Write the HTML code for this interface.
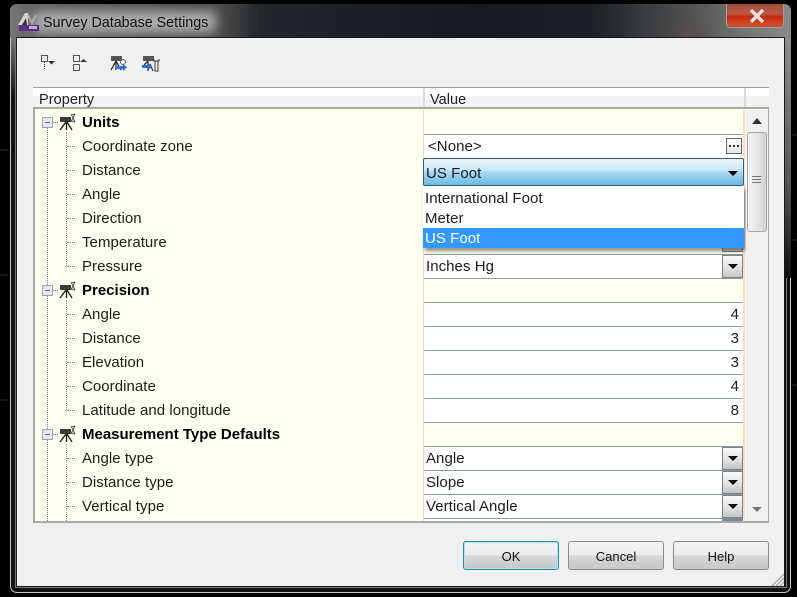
<!DOCTYPE html>
<html><head><meta charset="utf-8"><title>Survey Database Settings</title>
<style>
html,body{margin:0;padding:0;background:#000}
body{width:797px;height:597px;position:relative;overflow:hidden;font-family:"Liberation Sans",sans-serif;font-size:15px;letter-spacing:.05px;color:#1c1c1c}
.a{position:absolute}
.t{position:absolute;white-space:nowrap;line-height:18px;height:18px;margin-top:1px}
.l{left:82px}
.b{font-weight:bold;color:#000;left:82px;letter-spacing:0}
.v{left:426px}
.n{right:58px}
.y{position:absolute;left:423px;width:320px;height:24px;background:#fffff0}
.w{position:absolute;left:423px;width:320px;height:25px;box-sizing:border-box;background:#fff;border-top:1px solid #8b9aa6;border-bottom:1px solid #8b9aa6}
.c{position:absolute;left:722px;width:19px;height:21px;border:1px solid #808080;background:linear-gradient(#fafafa,#e8e8e8 45%,#c6c6c6)}
.c:after{content:"";position:absolute;left:5px;top:8px;border:5px solid transparent;border-top:5px solid #000;border-bottom:0}
.h{position:absolute;left:67px;width:8px;height:0;border-top:1px dotted #777}
.btn{position:absolute;top:541px;width:94px;height:27px;border:1px solid #8a8a8a;border-radius:3px;background:linear-gradient(#f4f4f4,#ececec 48%,#d6d6d6 52%,#c8c8c8);text-align:center;line-height:29px;font-size:13px;letter-spacing:0;color:#111}
</style></head><body>

<svg class="a" style="left:0;top:0" width="797" height="597">
<path d="M0 150H9M0 275H8M0 400H8M792 135H797M792 240H797M792 385H797" stroke="#2a2a2a"/>
</svg>

<!-- window frame -->
<div class="a" style="left:10px;top:4px;width:781px;height:589px;border-radius:7px;box-sizing:border-box;border:1px solid #c8c8c8;border-top:0;background:#111"></div>
<div class="a" style="left:15px;top:36px;width:772px;height:552px;box-sizing:border-box;border:1px solid #777"></div>
<div class="a" style="left:10px;top:4px;width:781px;height:34px;border-radius:7px 7px 0 0;overflow:hidden;background:linear-gradient(90deg,#777 0,#5a5a5a 4%,#444 28%,#23272b 32%,#161a1e 60%,#1e2226 75%,#555 88%,#6e7070 93%,#8a8a8a 100%)">
  <div class="a" style="left:24px;top:7px;width:182px;height:22px;background:#b0b0b0;filter:blur(6px)"></div>
  <div class="a" style="left:670px;top:22px;width:22px;height:14px;background:#5f4d4d;filter:blur(6px)"></div>
</div>
<div class="a" style="left:785px;top:38px;width:6px;height:240px;background:linear-gradient(#8f8f8f,#555 60%,#111)"></div>
<div class="a" style="left:11px;top:38px;width:4px;height:60px;background:linear-gradient(#777,#111)"></div>

<!-- app icon -->
<svg class="a" style="left:18px;top:11px" width="22" height="20" viewBox="0 0 22 20">
<path d="M0 14L7 2L10 2L10 14Z" fill="#d8d4d8"/><path d="M4 14L8 7L9 14Z" fill="#333"/>
<path d="M10 4L14 12L18 4" fill="none" stroke="#aaa" stroke-width="2"/>
<rect x="1" y="14" width="20" height="6" fill="#5d2f80"/><rect x="11" y="15" width="8" height="3" fill="#c9a5e0"/>
</svg>
<div class="t" style="left:43px;top:13px;font-size:14.300px;letter-spacing:0;color:#101010">Survey Database Settings</div>

<!-- close -->
<div class="a" style="left:726px;top:4px;width:58px;height:24px;box-sizing:border-box;border:1px solid #b89a90;border-top:0;border-radius:0 0 4px 4px;background:linear-gradient(#9a4a3a,#bd5a45 40%,#c42a10 55%,#d04a28 85%,#b8503a)"></div>
<svg class="a" style="left:749px;top:9px" width="16" height="14" viewBox="0 0 16 14"><path d="M2 1L14 13M14 1L2 13" stroke="#e8e4e0" stroke-width="3.400"/></svg>

<!-- client -->
<div class="a" style="left:16px;top:37px;width:769px;height:550px;box-sizing:border-box;border:1px solid #14181c;background:#f0f0f0"></div>
<div class="a" style="left:17px;top:38px;width:1px;height:548px;background:#fff"></div>

<!-- toolbar -->
<svg class="a" style="left:38px;top:52px" width="130" height="22" viewBox="0 0 130 22" fill="none">
<rect x="3.500" y="3.500" width="6" height="6" stroke="#555"/><path d="M6.500 10V18" stroke="#444" stroke-dasharray="1 1"/><path d="M10 9H17L13.500 12.500Z" fill="#333"/>
<rect x="35.500" y="3.500" width="6" height="6" stroke="#555"/><rect x="35.500" y="12.500" width="6" height="6" stroke="#555"/><path d="M42 10H49L45.500 7Z" fill="#333"/>
<g><rect x="73" y="4" width="11" height="5" fill="#555"/><path d="M78 9L73 18M78 9V18M78 9L83 18" stroke="#333" stroke-width="1.300"/><circle cx="85" cy="10" r="2.500" stroke="#666"/>
<path d="M79 14H85V11.500L89 15.500L85 19V17H79Z" fill="#2e74c8"/></g>
<g><rect x="105" y="4" width="11" height="5" fill="#555"/><path d="M110 9L106 13M110 9V19M112 12L115 19" stroke="#333" stroke-width="1.300"/>
<path d="M104 13H110V10.500L114 14.500L110 18.500V16H104Z" fill="#2e74c8"/><path d="M117 9V19H120V9M116 7V9H121V7" stroke="#555" stroke-width="1.200"/></g>
</svg>

<!-- table frame -->
<div class="a" style="left:33px;top:87px;width:736px;height:21px;background:linear-gradient(#fff 0,#fff 38%,#f3f3f4 40%,#f1f1f2);border-top:1px solid #a0a0a0;box-sizing:border-box"></div>
<div class="a" style="left:33px;top:107px;width:736px;height:416px;box-sizing:border-box;border:2px solid #a8a8a8;border-width:2px 1px 2px 2px;background:#fffff0"></div>
<div class="a" style="left:423px;top:88px;width:2px;height:19px;background:#dcdcdc"></div>
<div class="a" style="left:744px;top:88px;width:2px;height:19px;background:#dcdcdc"></div>
<div class="t" style="left:39px;top:90px;font-size:14.500px;color:#222">Property</div>
<div class="t" style="left:430px;top:90px;font-size:14.500px;color:#222">Value</div>

<!-- value rows -->
<div class="y" style="top:110px"></div>
<div class="w" style="top:134px"></div>
<div class="w" style="top:254px"></div>
<div class="w" style="top:302px"></div>
<div class="w" style="top:326px"></div>
<div class="w" style="top:350px"></div>
<div class="w" style="top:374px"></div>
<div class="w" style="top:398px"></div>
<div class="w" style="top:446px"></div>
<div class="w" style="top:470px"></div>
<div class="w" style="top:494px"></div>
<div class="a" style="left:423px;top:519px;width:320px;height:2px;background:#fff"></div>
<div class="a" style="left:423px;top:110px;width:1px;height:411px;background:#f2d6cc"></div>
<div class="a" style="left:743px;top:110px;width:2px;height:411px;background:#f6dccf"></div>

<!-- tree lines -->
<div class="a" style="left:47px;top:128px;height:393px;border-left:1px dotted #888"></div>
<div class="a" style="left:66px;top:132px;height:134px;border-left:1px dotted #888"></div>
<div class="a" style="left:66px;top:300px;height:110px;border-left:1px dotted #888"></div>
<div class="a" style="left:66px;top:444px;height:77px;border-left:1px dotted #888"></div>
<div class="h" style="top:146px"></div><div class="h" style="top:170px"></div><div class="h" style="top:194px"></div><div class="h" style="top:218px"></div><div class="h" style="top:242px"></div><div class="h" style="top:266px"></div>
<div class="h" style="top:314px"></div><div class="h" style="top:338px"></div><div class="h" style="top:362px"></div><div class="h" style="top:386px"></div><div class="h" style="top:410px"></div>
<div class="h" style="top:458px"></div><div class="h" style="top:482px"></div><div class="h" style="top:506px"></div>

<!-- group icons -->
<svg class="a" style="left:42px;top:112px" width="36" height="20" viewBox="0 0 36 20" fill="none">
<rect x=".500" y="5.500" width="10" height="10" fill="#e4e8ec" stroke="#9aa6b2"/><path d="M3 10.500H8" stroke="#667"/><path d="M11 10.500H16" stroke="#888" stroke-dasharray="1 1"/>
<rect x="18" y="5" width="11" height="5" fill="#3a3a3a"/><path d="M29 3L33 2M29 9L33 10M33 2L29 10M29 2L33 10" stroke="#555"/><path d="M24 10L18 18M24.500 10V18M25 10L30 18" stroke="#222" stroke-width="1.400"/>
</svg>
<svg class="a" style="left:42px;top:280px" width="36" height="20" viewBox="0 0 36 20" fill="none">
<rect x=".500" y="5.500" width="10" height="10" fill="#e4e8ec" stroke="#9aa6b2"/><path d="M3 10.500H8" stroke="#667"/><path d="M11 10.500H16" stroke="#888" stroke-dasharray="1 1"/>
<rect x="18" y="5" width="11" height="5" fill="#3a3a3a"/><path d="M29 3L33 2M29 9L33 10M33 2L29 10M29 2L33 10" stroke="#555"/><path d="M24 10L18 18M24.500 10V18M25 10L30 18" stroke="#222" stroke-width="1.400"/>
</svg>
<svg class="a" style="left:42px;top:424px" width="36" height="20" viewBox="0 0 36 20" fill="none">
<rect x=".500" y="5.500" width="10" height="10" fill="#e4e8ec" stroke="#9aa6b2"/><path d="M3 10.500H8" stroke="#667"/><path d="M11 10.500H16" stroke="#888" stroke-dasharray="1 1"/>
<rect x="18" y="5" width="11" height="5" fill="#3a3a3a"/><path d="M29 3L33 2M29 9L33 10M33 2L29 10M29 2L33 10" stroke="#555"/><path d="M24 10L18 18M24.500 10V18M25 10L30 18" stroke="#222" stroke-width="1.400"/>
</svg>

<!-- labels -->
<div class="t b" style="top:113px">Units</div>
<div class="t l" style="top:137px">Coordinate zone</div>
<div class="t l" style="top:161px">Distance</div>
<div class="t l" style="top:185px">Angle</div>
<div class="t l" style="top:209px">Direction</div>
<div class="t l" style="top:233px">Temperature</div>
<div class="t l" style="top:257px">Pressure</div>
<div class="t b" style="top:281px">Precision</div>
<div class="t l" style="top:305px">Angle</div>
<div class="t l" style="top:329px">Distance</div>
<div class="t l" style="top:353px">Elevation</div>
<div class="t l" style="top:377px">Coordinate</div>
<div class="t l" style="top:401px">Latitude and longitude</div>
<div class="t b" style="top:425px">Measurement Type Defaults</div>
<div class="t l" style="top:449px">Angle type</div>
<div class="t l" style="top:473px">Distance type</div>
<div class="t l" style="top:497px">Vertical type</div>

<!-- values -->
<div class="t" style="left:428px;top:137px">&lt;None&gt;</div>
<div class="t v" style="top:257px">Inches Hg</div>
<div class="t n" style="top:305px">4</div>
<div class="t n" style="top:329px">3</div>
<div class="t n" style="top:353px">3</div>
<div class="t n" style="top:377px">4</div>
<div class="t n" style="top:401px">8</div>
<div class="t v" style="top:449px">Angle</div>
<div class="t v" style="top:473px">Slope</div>
<div class="t v" style="top:497px">Vertical Angle</div>

<!-- ellipsis -->
<div class="a" style="left:726px;top:138px;width:14px;height:14px;border:1px solid #666;background:linear-gradient(#fff,#e6e6e6)"></div>
<div class="a" style="left:729px;top:145px;width:2px;height:2px;background:#333;box-shadow:4px 0 #333,8px 0 #333"></div>

<!-- combo buttons -->
<div class="c" style="top:255px"></div>
<div class="c" style="top:447px"></div>
<div class="c" style="top:471px"></div>
<div class="c" style="top:495px"></div>
<div class="a" style="left:722px;top:518px;width:21px;height:3px;background:#7b8a99"></div>
<div class="c" style="top:229px"></div>

<!-- active combo -->
<div class="a" style="left:423px;top:158px;width:321px;height:28px;box-sizing:border-box;border:1px solid #2f5f78;border-radius:2px;background:linear-gradient(#eaf6fc,#cfeaf8 40%,#a8d9f2 50%,#6fb8e4 100%)"></div>
<div class="t" style="left:426px;top:164px">US Foot</div>
<div class="a" style="left:728px;top:171px;border:5px solid transparent;border-top:5px solid #000;border-bottom:0"></div>

<!-- dropdown -->
<div class="a" style="left:423px;top:186px;width:321px;height:62px;background:#fff;box-shadow:2px 3px 4px rgba(0,0,0,.45)"></div>
<div class="a" style="left:423px;top:228px;width:321px;height:20px;background:#3399ff"></div>
<div class="t" style="left:425px;top:189px">International Foot</div>
<div class="t" style="left:425px;top:209px">Meter</div>
<div class="t" style="left:425px;top:229px;color:#fff">US Foot</div>

<!-- scrollbar -->
<div class="a" style="left:746px;top:110px;width:22px;height:411px;background:#f1f1f1"></div>
<div class="a" style="left:752px;top:118px;border:5px solid transparent;border-bottom:6px solid #333;border-top:0"></div>
<div class="a" style="left:752px;top:507px;border:5px solid transparent;border-top:5px solid #777;border-bottom:0"></div>
<div class="a" style="left:747px;top:132px;width:18px;height:98px;border:1px solid #a6a6a6;border-radius:3px;background:linear-gradient(90deg,#f4f4f4,#e6e6e6 50%,#d0d0d0)"></div>
<div class="a" style="left:752px;top:176px;width:9px;height:1px;background:#777;box-shadow:0 3px #777,0 6px #777"></div>

<!-- buttons -->
<div class="btn" style="left:463px;border:1px solid #2f88b0;box-shadow:inset 0 0 0 1px #a8e4f8;width:94px">OK</div>
<div class="btn" style="left:568px">Cancel</div>
<div class="btn" style="left:673px">Help</div>

<!-- grip -->
<svg class="a" style="left:771px;top:573px" width="14" height="14"><path d="M13 1L1 13M13 5L5 13M13 9L9 13" stroke="#999" stroke-width="1.200"/></svg>
</body></html>
